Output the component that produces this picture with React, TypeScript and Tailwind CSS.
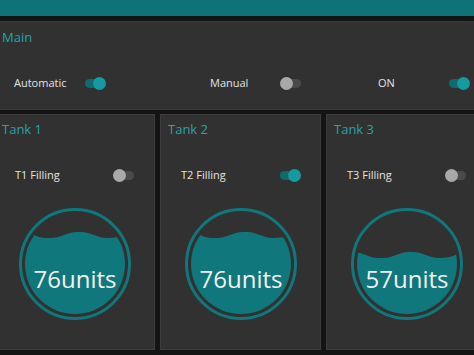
import React from 'react';

const font = { fontFamily: '"Open Sans", "Noto Sans", sans-serif' };

function Toggle({ on }: { on: boolean }) {
    return (
        <div className="relative w-[22px] h-[13px] flex items-center shrink-0">
            <div className={`absolute left-[1px] right-[1px] h-[9px] rounded-full ${on ? 'bg-[#0f6a6e]' : 'bg-[#4a4a4a]'}`} />
            <div
                className={`absolute w-[13px] h-[13px] rounded-full ${on ? 'right-0 bg-[#159a9f]' : 'left-0 bg-[#a9a9a9]'}`}
            />
        </div>
    );
}

// water drawn as a wavy shape, clipped to the inner circle
function TankGauge({ value, level }: { value: number; level: number }) {
    const id = `clip-${value}-${level}`;
    const c = level - 3;
    const t = level + 3;
    const wave = `M0 ${c} C15 ${c} 15 ${t} 30 ${t} S45 ${c} 60 ${c} S75 ${t} 90 ${t} S105 ${c} 120 ${c} V112 H0 Z`;
    return (
        <svg width="112" height="112" viewBox="0 0 112 112" className="block w-[112px] h-[112px] shrink-0">
            <defs>
                <clipPath id={id}>
                    <circle cx="56" cy="56" r="50" />
                </clipPath>
            </defs>
            <circle cx="56" cy="56" r="54.5" fill="none" stroke="#10777c" strokeWidth="3" />
            <path d={wave} fill="#10777c" clipPath={`url(#${id})`} />
            <text
                x="56"
                y="80"
                textAnchor="middle"
                fill="#f2f2f2"
                fontSize="24"
                fontFamily='"Open Sans", "Noto Sans", sans-serif'
            >
                {value}units
            </text>
        </svg>
    );
}

function TankPanel({ n, filling, value, level, first }: { n: number; filling: boolean; value: number; level: number; first?: boolean }) {
    return (
        <div className={`w-[161px] shrink-0 h-full bg-[#313131] border border-[#3d3d3d] flex flex-col ${first ? 'ml-[-6px]' : ''}`}>
            <div className="h-[23px] pl-[7px] pt-[5px] text-[13px] text-[#26a3ab] leading-[18px]">Tank {n}</div>
            <div className="flex items-center mt-[29px] h-[16px]">
                <div className="pl-[20px] w-[118px] text-[11px] text-[#e4e4e4]">T{n} Filling</div>
                <Toggle on={filling} />
            </div>
            <div className="h-[112px] mt-[25px] flex justify-center pl-[1px]">
                <TankGauge value={value} level={level} />
            </div>
        </div>
    );
}

export default function App() {
    return (
        <div className="w-[474px] h-[355px] overflow-hidden bg-[#141414] flex flex-col" style={font}>
            <div className="h-[16px] bg-[#0d7378] shrink-0" />
            <div className="mt-[5px] h-[89px] bg-[#313131] border-y border-[#3a3a3a] shrink-0 flex flex-col">
                <div className="pl-[2px] pt-[6px] text-[13px] text-[#26a3ab] leading-[18px]">Main</div>
                <div className="flex items-center mt-[29px] pl-[14px] h-[16px] text-[11px] text-[#e4e4e4]">
                    <div className="w-[196px] flex items-center">
                        <span className="w-[70px]">Automatic</span>
                        <Toggle on />
                    </div>
                    <div className="w-[168px] flex items-center">
                        <span className="w-[70px]">Manual</span>
                        <Toggle on={false} />
                    </div>
                    <div className="flex items-center">
                        <span className="w-[70px]">ON</span>
                        <Toggle on />
                    </div>
                </div>
            </div>
            <div className="mt-[4px] h-[236px] flex gap-[5px] shrink-0">
                <TankPanel n={1} filling={false} value={76} level={27} first />
                <TankPanel n={2} filling value={76} level={27} />
                <TankPanel n={3} filling={false} value={57} level={47} />
            </div>
        </div>
    );
}
